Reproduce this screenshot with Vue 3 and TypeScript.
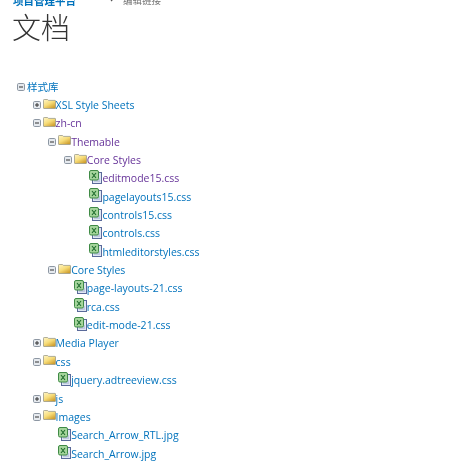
<script setup lang="ts">
interface Row {
  label: string
  depth: number
  kind: 'root' | 'open' | 'closed' | 'file'
  visited?: boolean
}

const rows: Row[] = [
  { label: '样式库', depth: 0, kind: 'root' },
  { label: 'XSL Style Sheets', depth: 1, kind: 'closed' },
  { label: 'zh-cn', depth: 1, kind: 'open', visited: true },
  { label: 'Themable', depth: 2, kind: 'open', visited: true },
  { label: 'Core Styles', depth: 3, kind: 'open', visited: true },
  { label: 'editmode15.css', depth: 4, kind: 'file', visited: true },
  { label: 'pagelayouts15.css', depth: 4, kind: 'file' },
  { label: 'controls15.css', depth: 4, kind: 'file' },
  { label: 'controls.css', depth: 4, kind: 'file' },
  { label: 'htmleditorstyles.css', depth: 4, kind: 'file' },
  { label: 'Core Styles', depth: 2, kind: 'open' },
  { label: 'page-layouts-21.css', depth: 3, kind: 'file' },
  { label: 'rca.css', depth: 3, kind: 'file' },
  { label: 'edit-mode-21.css', depth: 3, kind: 'file' },
  { label: 'Media Player', depth: 1, kind: 'closed' },
  { label: 'css', depth: 1, kind: 'open' },
  { label: 'jquery.adtreeview.css', depth: 2, kind: 'file' },
  { label: 'js', depth: 1, kind: 'closed' },
  { label: 'Images', depth: 1, kind: 'open' },
  { label: 'Search_Arrow_RTL.jpg', depth: 2, kind: 'file' },
  { label: 'Search_Arrow.jpg', depth: 2, kind: 'file' },
]

const indent = (depth: number) => ({ paddingLeft: `${17 + depth * 15.6}px` })
</script>

<template>
  <div class="page">
    <header class="crumbs">
      <a class="site">项目管理平台</a>
      <span class="edit">
        <svg class="pin" width="8" height="8" viewBox="0 0 8 8"><path d="M1 7 L4 4 M3 2 L6 5 M4 1 L7 4" stroke="#555" stroke-width="1.2" fill="none" /></svg>
        编辑链接
      </span>
    </header>
    <h1 class="title">文档</h1>
    <ul class="tree">
      <li v-for="(row, i) in rows" :key="i" class="row" :style="indent(row.depth)">
        <span class="slot">
          <svg v-if="row.kind !== 'file'" width="8" height="8" viewBox="0 0 8 8">
            <rect x="0.5" y="0.5" width="7" height="7" rx="1.2" fill="#e6eaef" stroke="#8d97a3" />
            <path d="M2 4 H6" stroke="#333" stroke-width="1" />
            <path v-if="row.kind === 'closed'" d="M4 2 V6" stroke="#333" stroke-width="1" />
          </svg>
        </span>
        <svg v-if="row.kind === 'open' || row.kind === 'closed'" class="icon" width="13" height="10" viewBox="0 0 13 10">
          <defs>
            <linearGradient :id="`f${i}`" x1="0" y1="0" x2="0.7" y2="1">
              <stop offset="0" stop-color="#fff6c8" />
              <stop offset="0.55" stop-color="#f7dc78" />
              <stop offset="1" stop-color="#cf9f30" />
            </linearGradient>
          </defs>
          <path d="M0.5 1.8 V1.1 Q0.5 0.5 1.2 0.5 H4.5 L5.5 1.4 H12 Q12.5 1.4 12.5 1.9 V9 Q12.5 9.5 12 9.5 H1 Q0.5 9.5 0.5 9 Z" :fill="`url(#f${i})`" stroke="#9c9a88" stroke-width="0.8" />
        </svg>
        <svg v-else-if="row.kind === 'file'" class="icon" width="13" height="14" viewBox="0 0 13 14">
          <rect x="3.5" y="2.5" width="9" height="11" fill="#dfe6f3" stroke="#5a6a9a" />
          <path d="M5 11 H11 M5 9 H11" stroke="#8fa0c8" stroke-width="0.8" />
          <rect x="0.5" y="0.5" width="9" height="9.5" rx="1.5" fill="#a5d59c" stroke="#3f8a45" />
          <path d="M3 3 L7 8 M7 3 L3 8" stroke="#1d6a2c" stroke-width="1.1" />
        </svg>
        <a class="label" :class="{ visited: row.visited }">{{ row.label }}</a>
      </li>
    </ul>
  </div>
</template>

<style scoped>
.page {
  width: 474px;
  height: 472px;
  overflow: hidden;
  background: #fff;
  font-family: "Open Sans", "Noto Sans CJK SC", sans-serif;
  filter: blur(0.35px);
}
.crumbs {
  display: flex;
  align-items: center;
  height: 14px;
  margin-top: -7px;
  padding-left: 13px;
}
.site {
  width: 97px;
  font-size: 10.5px;
  font-weight: 700;
  color: #0072bc;
  white-space: nowrap;
}
.edit {
  display: flex;
  align-items: center;
  gap: 5px;
  font-size: 9.5px;
  color: #777;
  white-space: nowrap;
}
.pin {
  margin-top: -4px;
}
.title {
  margin: 5px 0 0 12px;
  font-size: 29px;
  line-height: 32px;
  font-weight: 300;
  color: #333;
}
.tree {
  list-style: none;
  margin: 0;
  padding: 33.5px 0 0;
}
.row {
  display: flex;
  align-items: center;
  height: 18.35px;
}
.slot {
  display: flex;
  flex: none;
  align-items: center;
  width: 10px;
}
.icon {
  flex: none;
  margin-top: -3px;
}
.label {
  font-size: 10.5px;
  line-height: 18px;
  color: #0072bc;
  white-space: nowrap;
}
.label.visited {
  color: #663399;
}
</style>
